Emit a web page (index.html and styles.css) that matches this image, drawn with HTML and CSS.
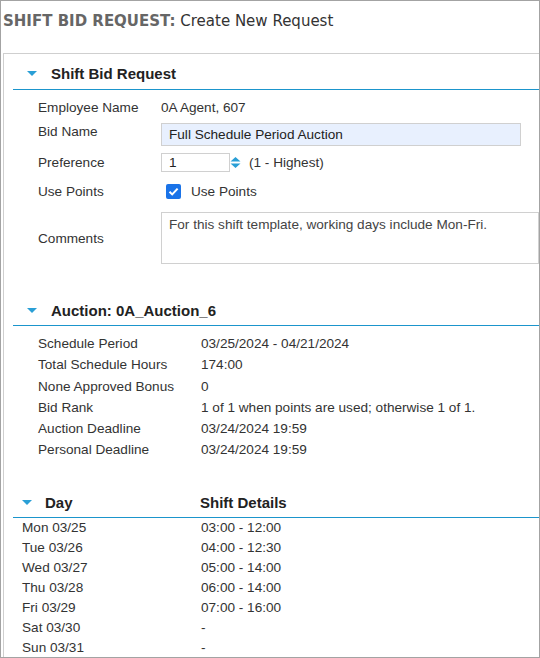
FILE: index.html
```html
<!DOCTYPE html>
<html>
<head>
<meta charset="utf-8">
<link rel="stylesheet" href="styles.css">
</head>
<body>
<div class="frame">
  <h1 class="page-title"><span class="title-key">SHIFT BID REQUEST:</span> Create New Request</h1>
  <div class="panel">
    <section class="section">
      <div class="section-head sh1"><span class="caret"></span><span class="section-title">Shift Bid Request</span></div>
      <div class="form">
        <div class="frow r1"><span class="lbl">Employee Name</span><span class="val">0A Agent, 607</span></div>
        <div class="frow r2"><span class="lbl">Bid Name</span><input class="txt bid" type="text" value="Full Schedule Period Auction"></div>
        <div class="frow r3"><span class="lbl">Preference</span>
          <input class="txt pref" type="text" value="1">
          <svg class="spin" width="11" height="13" viewBox="0 0 11 13"><path d="M5.5 1 L10.5 5.5 L0.5 5.5 Z M0.5 7.5 L10.5 7.5 L5.5 12 Z" fill="#2a9fd6"/></svg>
          <span class="hint">(1 - Highest)</span>
        </div>
        <div class="frow r4"><span class="lbl">Use Points</span>
          <label class="chk"><span class="box"><svg width="15" height="15" viewBox="0 0 15 15"><path d="M3.5 7.8 L6.2 10.4 L11.6 4.6" fill="none" stroke="#fff" stroke-width="2"/></svg></span>Use Points</label>
        </div>
        <div class="frow r5"><span class="lbl">Comments</span><textarea class="comments">For this shift template, working days include Mon-Fri.</textarea></div>
      </div>
    </section>

    <section class="section sec2">
      <div class="section-head"><span class="caret"></span><span class="section-title">Auction: 0A_Auction_6</span></div>
      <div class="info">
        <div class="irow"><span class="ilbl">Schedule Period</span><span>03/25/2024 - 04/21/2024</span></div>
        <div class="irow"><span class="ilbl">Total Schedule Hours</span><span>174:00</span></div>
        <div class="irow"><span class="ilbl">None Approved Bonus</span><span>0</span></div>
        <div class="irow"><span class="ilbl">Bid Rank</span><span>1 of 1 when points are used; otherwise 1 of 1.</span></div>
        <div class="irow"><span class="ilbl">Auction Deadline</span><span>03/24/2024 19:59</span></div>
        <div class="irow"><span class="ilbl">Personal Deadline</span><span>03/24/2024 19:59</span></div>
      </div>
    </section>

    <section class="section sec3">
      <div class="table-head"><span class="tcol1"><span class="caret"></span><span class="section-title">Day</span></span><span class="section-title">Shift Details</span></div>
      <div class="trow"><span class="tcol1">Mon 03/25</span><span>03:00 - 12:00</span></div>
      <div class="trow"><span class="tcol1">Tue 03/26</span><span>04:00 - 12:30</span></div>
      <div class="trow"><span class="tcol1">Wed 03/27</span><span>05:00 - 14:00</span></div>
      <div class="trow"><span class="tcol1">Thu 03/28</span><span>06:00 - 14:00</span></div>
      <div class="trow"><span class="tcol1">Fri 03/29</span><span>07:00 - 16:00</span></div>
      <div class="trow"><span class="tcol1">Sat 03/30</span><span>-</span></div>
      <div class="trow"><span class="tcol1">Sun 03/31</span><span>-</span></div>
    </section>
  </div>
</div>
</body>
</html>
```

FILE: styles.css
```css
html, body {
  margin: 0;
  padding: 0;
  background: #fff;
}
.frame {
  box-sizing: border-box;
  width: 540px;
  height: 658px;
  border: 1px solid #a3a3a3;
  overflow: hidden;
  font-family: "Liberation Sans", Arial, sans-serif;
  font-size: 13.6px;
  color: #333;
}
.page-title {
  margin: 0;
  padding: 11px 0 0 2px;
  height: 41px;
  box-sizing: border-box;
  font-family: "DejaVu Sans", Verdana, sans-serif;
  font-size: 15px;
  font-weight: normal;
  line-height: 18px;
  color: #333;
  white-space: nowrap;
}
.title-key {
  font-weight: bold;
  color: #666;
}
.panel {
  margin: 11px 0 0 2px;
  border-top: 1px solid #cfcfcf;
  border-left: 1px solid #cfcfcf;
  min-height: 700px;
}
.section-head {
  display: flex;
  align-items: center;
  margin-left: 9px;
  padding: 9px 0 4px 14px;
  height: 22px;
  border-bottom: 1px solid #1b95cc;
}
.sh1 {
  padding-top: 8px;
  padding-bottom: 5px;
}
.caret {
  width: 0;
  height: 0;
  border-left: 5px solid transparent;
  border-right: 5px solid transparent;
  border-top: 5px solid #2a9fd6;
  margin-right: 14px;
}
.section-title {
  font-size: 15px;
  font-weight: bold;
  color: #222;
}
.form {
  padding: 7px 0 0 34px;
  display: flex;
  flex-direction: column;
}
.frow {
  display: flex;
  align-items: center;
  white-space: nowrap;
}
.lbl {
  width: 123px;
  flex: none;
}
.r1 { height: 20px; }
.r2 { margin-top: 6px; align-items: flex-start; height: 23px; }
.r2 .lbl { padding-top: 1px; }
.r3 { margin-top: 7px; height: 19px; }
.r4 { margin-top: 11px; height: 16px; }
.r5 { margin-top: 13px; }
.txt {
  box-sizing: border-box;
  border: 1px solid #d0d0d0;
  font-family: "Liberation Sans", Arial, sans-serif;
  font-size: 13.6px;
  color: #222;
  margin: 0;
  outline: none;
}
.bid {
  width: 360px;
  height: 23px;
  padding: 0 7px;
  background: #e8f0fe;
}
.pref {
  width: 69px;
  height: 19px;
  padding: 0 7px;
  background: #fff;
}
.spin {
  margin: 0 8px 0 0;
  flex: none;
}
.chk {
  display: flex;
  align-items: center;
  margin-left: 5px;
}
.box {
  width: 15px;
  height: 15px;
  border-radius: 2px;
  background: #1a73e8;
  margin-right: 10px;
  display: block;
}
.box svg { display: block; }
.comments {
  box-sizing: border-box;
  width: 400px;
  height: 52px;
  border: 1px solid #d0d0d0;
  padding: 4px 7px;
  font-family: "Liberation Sans", Arial, sans-serif;
  font-size: 13.6px;
  color: #444;
  resize: none;
  margin: 0;
  overflow: hidden;
}
.sec2 {
  margin-top: 26px;
}
.info {
  padding: 7px 0 0 34px;
}
.irow {
  display: flex;
  line-height: 21.3px;
  white-space: nowrap;
}
.ilbl {
  width: 163px;
  flex: none;
}
.sec3 {
  margin-top: 31px;
}
.table-head {
  display: flex;
  align-items: center;
  margin-left: 9px;
  padding: 0 0 3px 9px;
  height: 22px;
  border-bottom: 1px solid #1b95cc;
}
.table-head .tcol1 {
  display: flex;
  align-items: center;
  width: 178px;
  flex: none;
}
.table-head .caret { margin-right: 13px; }
.trow {
  display: flex;
  line-height: 20px;
  padding-left: 18px;
  white-space: nowrap;
}
.trow .tcol1 {
  width: 179px;
  flex: none;
}
```
